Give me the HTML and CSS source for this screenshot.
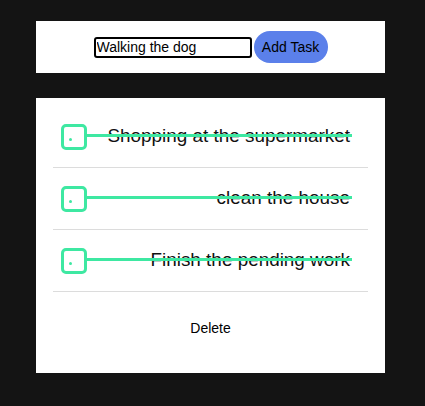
FILE: index.html
```html
<!DOCTYPE html>
<html lang="en">
<head>
<meta charset="utf-8">
<title>Todo</title>
<link rel="stylesheet" href="styles.css">
</head>
<body>
<div class="app">
  <form class="add-card">
    <input class="task-input" type="text" value="Walking the dog">
    <button class="add-btn" type="button">Add Task</button>
  </form>
  <div class="list-card">
    <ul class="tasks">
      <li class="task done"><span class="check"><span class="dot"></span></span><span class="label">Shopping at the supermarket</span></li>
      <li class="task done"><span class="check"><span class="dot"></span></span><span class="label">clean the house</span></li>
      <li class="task done"><span class="check"><span class="dot"></span></span><span class="label">Finish the pending work</span></li>
    </ul>
    <div class="actions"><button class="delete-btn" type="button">Delete</button></div>
  </div>
</div>
</body>
</html>
```

FILE: styles.css
```css
html, body {
  margin: 0;
  padding: 0;
  background: #141414;
  font-family: "Liberation Sans", Arial, sans-serif;
}
.app {
  width: 349px;
  padding: 21px 0 0 36px;
}
.add-card {
  margin: 0;
  background: #fff;
  height: 52px;
  display: flex;
  align-items: center;
  justify-content: center;
  gap: 2px;
}
.task-input {
  box-sizing: border-box;
  width: 158px;
  height: 21px;
  border: 2px solid #000;
  border-radius: 3px;
  padding: 0 1px;
  font-family: "Liberation Sans", Arial, sans-serif;
  font-size: 14px;
  color: #000;
  outline: none;
}
.add-btn {
  box-sizing: border-box;
  height: 32px;
  width: 74px;
  border: none;
  border-radius: 16px;
  background: #5b80ea;
  color: #000;
  font-family: "Liberation Sans", Arial, sans-serif;
  font-size: 14px;
  padding: 0;
}
.list-card {
  margin-top: 25px;
  background: #fff;
  height: 275px;
  padding: 8px 17px 0;
  box-sizing: border-box;
}
.tasks {
  list-style: none;
  margin: 0;
  padding: 0;
}
.task {
  position: relative;
  height: 61px;
  border-bottom: 1px solid #dcdcdc;
  display: flex;
  align-items: center;
  justify-content: space-between;
  padding: 0 18px 0 8px;
}
.check {
  box-sizing: border-box;
  width: 26px;
  height: 26px;
  border: 3px solid #3ee8a2;
  border-radius: 5px;
  position: relative;
  flex: none;
}
.dot {
  position: absolute;
  left: 5px;
  top: 11px;
  width: 3px;
  height: 3px;
  background: #3ee8a2;
  border-radius: 50%;
}
.label {
  font-size: 18.9px;
  line-height: 22px;
  margin-top: -1px;
  color: #111;
}
.task.done::after {
  content: "";
  position: absolute;
  left: 34px;
  right: 16px;
  top: 28px;
  height: 3px;
  background: #3ee8a2;
}
.actions {
  display: flex;
  justify-content: center;
  padding-top: 28px;
}
.delete-btn {
  border: none;
  background: transparent;
  font-family: "Liberation Sans", Arial, sans-serif;
  font-size: 14px;
  color: #000;
  padding: 0;
  line-height: 16px;
}
```
